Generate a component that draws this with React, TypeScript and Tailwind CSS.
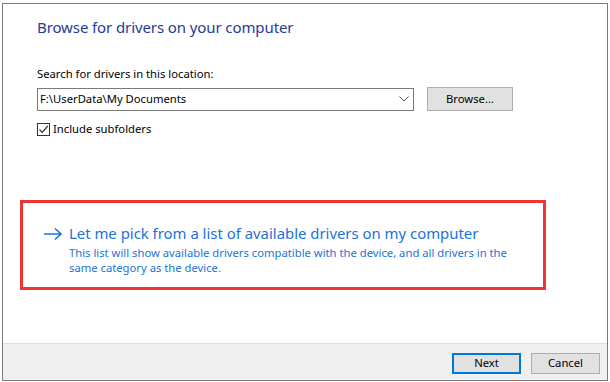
import React from 'react';

const font = { fontFamily: '"Noto Sans", "Open Sans", Arial, sans-serif' };

const Chevron = () => (
  <svg width="10" height="6" viewBox="0 0 10 6" fill="none">
    <path d="M0.5 0.5 L5 5 L9.5 0.5" stroke="#505050" strokeWidth="1" />
  </svg>
);

const Check = () => (
  <svg width="11" height="11" viewBox="0 0 11 11" fill="none">
    <path d="M1.5 5.5 L4.2 8.3 L9.8 2" stroke="#333" strokeWidth="1.2" />
  </svg>
);

const Arrow = () => (
  <svg width="20" height="14" viewBox="0 0 20 14" fill="none">
    <path d="M1 7 H18 M12 1.5 L18 7 L12 12.5" stroke="#1a73d9" strokeWidth="1.6" />
  </svg>
);

export default function App() {
  return (
    <div className="w-[610px] h-[382px] bg-white pt-[3px] pl-[2px]" style={font}>
      <div className="w-[606px] h-[378px] border border-[#7a7a7a] flex flex-col">
        <div className="flex-1 flex flex-col pl-[34px] pt-[12px]">
          <h1 className="text-[15px] leading-[22px] tracking-[-0.1px] text-[#1e3c96]">Browse for drivers on your computer</h1>

          <div className="mt-[28px] text-[11.25px] leading-[16px] text-black">Search for drivers in this location:</div>

          <div className="mt-[5px] flex items-center">
            <div className="w-[377px] h-[23px] border border-[#7a7a7a] flex items-center justify-between pl-[2px] pr-[4px] text-[11.25px] text-black">
              <span>F:\UserData\My Documents</span>
              <Chevron />
            </div>
            <button className="ml-[13px] w-[86px] h-[24px] bg-[#e1e1e1] border border-[#adadad] text-[11.25px] text-black">
              Browse...
            </button>
          </div>

          <label className="mt-[10px] flex items-center gap-[3px] text-[11.25px] leading-[16px] text-black">
            <span className="w-[13px] h-[13px] border border-[#333] flex items-center justify-center">
              <Check />
            </span>
            Include subfolders
          </label>

          <div className="-ml-[17px] mt-[63px] w-[526px] h-[90px] border-[3px] border-[#ef3434] flex pt-[19px] pl-[20px]">
            <div className="pt-[5px] w-[26px]">
              <Arrow />
            </div>
            <div className="text-[#1a73d9]">
              <div className="text-[14.9px] leading-[22px]">Let me pick from a list of available drivers on my computer</div>
              <div className="text-[11.25px] leading-[15px] w-[450px] mt-[1px]">
                This list will show available drivers compatible with the device, and all drivers in the same category as the device.
              </div>
            </div>
          </div>
        </div>

        <div className="h-[37px] bg-[#f0f0f0] border-t border-[#dfdfdf] flex items-start justify-end gap-[10px] pr-[7px] pt-[9px]">
          <button className="w-[69px] h-[21px] bg-[#e1e1e1] border-2 border-[#0078d7] text-[11.25px] text-black">Next</button>
          <button className="w-[69px] h-[21px] bg-[#e1e1e1] border border-[#adadad] text-[11.25px] text-black">Cancel</button>
        </div>
      </div>
    </div>
  );
}
